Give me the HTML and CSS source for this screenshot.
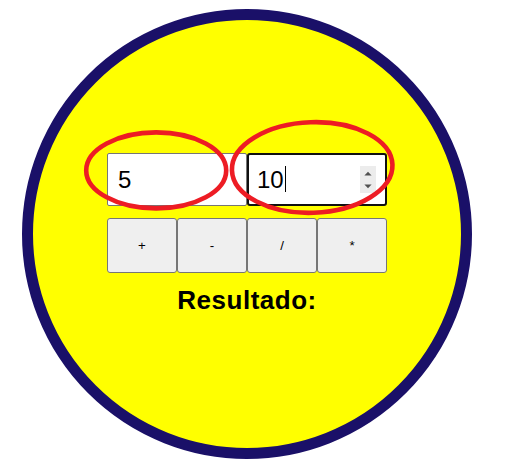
FILE: index.html
```html
<!DOCTYPE html>
<html lang="pt">
<head>
<meta charset="utf-8">
<title>Calculadora</title>
<link rel="stylesheet" href="styles.css">
</head>
<body>
<div class="circle">
  <div class="inputs">
    <div class="field">
      <input class="num" type="text" value="5">
    </div>
    <div class="field">
      <input class="num focused" type="text" value="10">
      <span class="caret"></span>
      <span class="spinner">
        <svg viewBox="0 0 16 27" width="16" height="27">
          <polygon points="4.4,9.4 11.6,9.4 8,5.8" fill="#505050"/>
          <polygon points="4.4,18.6 11.6,18.6 8,22.2" fill="#505050"/>
        </svg>
      </span>
    </div>
  </div>
  <div class="ops">
    <button class="op">+</button>
    <button class="op">-</button>
    <button class="op">/</button>
    <button class="op">*</button>
  </div>
  <h2 class="result">Resultado:</h2>
</div>
<svg class="marks" width="505" height="469" viewBox="0 0 505 469">
  <ellipse cx="156.2" cy="170.4" rx="70" ry="38" fill="none" stroke="#ed1c24" stroke-width="4.6"/>
  <ellipse cx="312.2" cy="167.5" rx="80.3" ry="45.3" fill="none" stroke="#ed1c24" stroke-width="4.6" transform="rotate(-2 312.2 167.5)"/>
</svg>
</body>
</html>
```

FILE: styles.css
```css
html, body {
  margin: 0;
  padding: 0;
  background: #ffffff;
}

body {
  position: relative;
  width: 505px;
  height: 469px;
  overflow: hidden;
  font-family: "Liberation Sans", Arial, sans-serif;
}

.circle {
  box-sizing: border-box;
  width: 450px;
  height: 450px;
  margin: 9px 0 0 22px;
  border: 11px solid #1a1068;
  border-radius: 50%;
  background: #ffff00;
  display: flex;
  flex-direction: column;
  align-items: center;
  justify-content: center;
}

.inputs {
  display: flex;
  width: 280px;
}

.field {
  position: relative;
  width: 140px;
  height: 53px;
}

.num {
  box-sizing: border-box;
  width: 140px;
  height: 53px;
  margin: 0;
  padding: 0 10px;
  border: 1px solid #767676;
  border-radius: 2px;
  background: #ffffff;
  color: #000000;
  font-family: "Liberation Sans", Arial, sans-serif;
  font-size: 24px;
  outline: none;
  caret-color: transparent;
}

.num.focused {
  border: 2px solid #101010;
  border-radius: 3px;
  padding-left: 8px;
}

.caret {
  position: absolute;
  left: 38px;
  top: 13px;
  width: 1px;
  height: 26px;
  background: #000000;
}

.spinner {
  position: absolute;
  right: 11px;
  top: 13px;
  width: 16px;
  height: 27px;
  background: #ececec;
  display: block;
}

.spinner svg {
  display: block;
}

.ops {
  display: grid;
  grid-template-columns: repeat(4, 70px);
  margin-top: 12px;
}

.op {
  box-sizing: border-box;
  width: 70px;
  height: 55px;
  margin: 0;
  padding: 0;
  border: 1px solid #767676;
  border-radius: 3px;
  background: #efefef;
  color: #000000;
  font-family: "Liberation Sans", Arial, sans-serif;
  font-size: 13.333px;
}

.result {
  margin: 12px 0 0;
  font-size: 26px;
  line-height: 30px;
  font-weight: bold;
  letter-spacing: 0.5px;
  color: #000000;
}

.marks {
  position: absolute;
  left: 0;
  top: 0;
  pointer-events: none;
}
```
